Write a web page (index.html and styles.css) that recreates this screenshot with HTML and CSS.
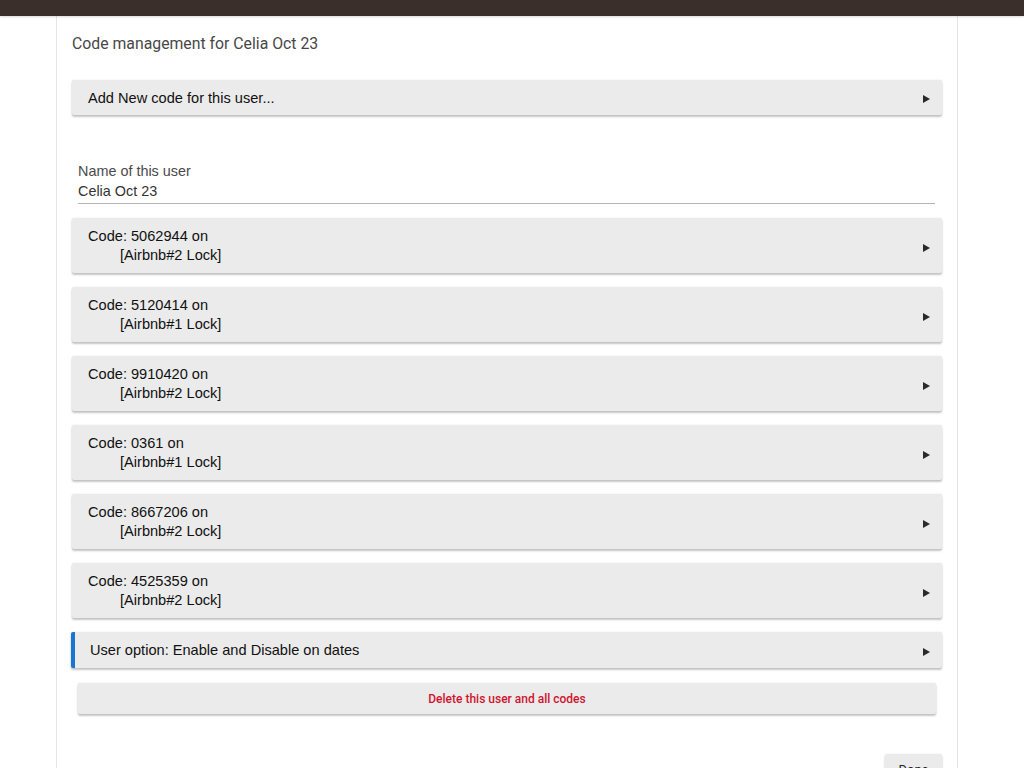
FILE: index.html
```html
<!DOCTYPE html>
<html>
<head>
<meta charset="utf-8">
<link rel="stylesheet" href="styles.css">
</head>
<body>
<div class="topbar"></div>
<div class="page">
  <h1 class="title">Code management for Celia Oct 23</h1>

  <div class="item item-short">
    <span class="item-text">Add New code for this user...</span>
    <span class="arrow"></span>
  </div>

  <div class="field">
    <div class="field-label">Name of this user</div>
    <div class="field-value">Celia Oct 23</div>
  </div>

  <div class="item item-code">
    <div class="item-text">Code: 5062944 on<span class="lock">[Airbnb#2 Lock]</span></div>
    <span class="arrow"></span>
  </div>
  <div class="item item-code">
    <div class="item-text">Code: 5120414 on<span class="lock">[Airbnb#1 Lock]</span></div>
    <span class="arrow"></span>
  </div>
  <div class="item item-code">
    <div class="item-text">Code: 9910420 on<span class="lock">[Airbnb#2 Lock]</span></div>
    <span class="arrow"></span>
  </div>
  <div class="item item-code">
    <div class="item-text">Code: 0361 on<span class="lock">[Airbnb#1 Lock]</span></div>
    <span class="arrow"></span>
  </div>
  <div class="item item-code">
    <div class="item-text">Code: 8667206 on<span class="lock">[Airbnb#2 Lock]</span></div>
    <span class="arrow"></span>
  </div>
  <div class="item item-code">
    <div class="item-text">Code: 4525359 on<span class="lock">[Airbnb#2 Lock]</span></div>
    <span class="arrow"></span>
  </div>

  <div class="item item-short item-option">
    <span class="item-text">User option: Enable and Disable on dates</span>
    <span class="arrow"></span>
  </div>

  <div class="delete-wrap">
    <button class="delete-btn">Delete this user and all codes</button>
  </div>

  <div class="actions">
    <button class="done-btn">Done</button>
  </div>
</div>
</body>
</html>
```

FILE: styles.css
```css
html, body {
  margin: 0;
  padding: 0;
  background: #ffffff;
  overflow: hidden;
}

body {
  font-family: "Liberation Sans", Arial, sans-serif;
  color: #1c1c1c;
}

.topbar {
  height: 16px;
  background: #3b2f2c;
  box-shadow: 0 1px 2px rgba(0, 0, 0, 0.15);
  position: relative;
  z-index: 2;
}

.page {
  margin-left: 56px;
  width: 870px;
  padding: 17px 15px 40px 15px;
  border-left: 1px solid #e4e4e4;
  border-right: 1px solid #e4e4e4;
  min-height: 800px;
}

.title {
  margin: 0 0 25px 0;
  font-family: Roboto, "Liberation Sans", sans-serif;
  font-weight: 400;
  font-size: 15.8px;
  line-height: 22px;
  color: #474747;
}

.item {
  display: flex;
  align-items: center;
  justify-content: space-between;
  background: #ebebeb;
  border-radius: 2px;
  box-shadow: 0 2px 2px rgba(0, 0, 0, 0.22), 0 0 2px rgba(0, 0, 0, 0.10);
  padding: 0 12px 0 16px;
  font-size: 14.6px;
  color: #111;
}

.item-short {
  height: 35px;
  line-height: 20px;
}

.item-code {
  height: 55px;
  box-sizing: border-box;
  padding-top: 9px;
  padding-bottom: 8px;
  margin-bottom: 14px;
  line-height: 19px;
}

.item-text {
  display: block;
}

.lock {
  display: block;
  padding-left: 32px;
}

.arrow {
  flex: none;
  width: 0;
  height: 0;
  border-top: 4px solid transparent;
  border-bottom: 4px solid transparent;
  border-left: 7px solid #2a2a2a;
  margin-top: 3px;
}

.field {
  margin: 46px 7px 14px 6px;
  border-bottom: 1px solid #b5b5b5;
  padding-bottom: 2px;
  font-size: 14.4px;
  line-height: 20px;
}

.field-label {
  color: #4a4a4a;
}

.field-value {
  color: #333;
}

.item-option {
  height: 36px;
  border-left: 4px solid #1a75d2;
  padding-left: 15px;
  margin-left: -1px;
  margin-bottom: 15px;
  line-height: 20px;
}

.delete-wrap {
  padding: 0 6px;
}

.delete-btn {
  display: block;
  width: 100%;
  height: 31px;
  border: none;
  border-radius: 2px;
  background: #ebebeb;
  box-shadow: 0 2px 2px rgba(0, 0, 0, 0.22), 0 0 2px rgba(0, 0, 0, 0.10);
  font-family: Roboto, "Liberation Sans", sans-serif;
  font-weight: 500;
  font-size: 12px;
  color: #d0132e;
  padding: 0;
}

.actions {
  display: flex;
  justify-content: flex-end;
  margin-top: 40px;
}

.done-btn {
  width: 57px;
  height: 36px;
  border: none;
  border-radius: 2px;
  background: #ebebeb;
  box-shadow: 0 2px 2px rgba(0, 0, 0, 0.22), 0 0 2px rgba(0, 0, 0, 0.10);
  font-family: Roboto, "Liberation Sans", sans-serif;
  font-size: 13px;
  line-height: 16px;
  color: #222;
  padding: 8px 0 0 0;
  display: flex;
  justify-content: center;
  align-items: flex-start;
}
```
